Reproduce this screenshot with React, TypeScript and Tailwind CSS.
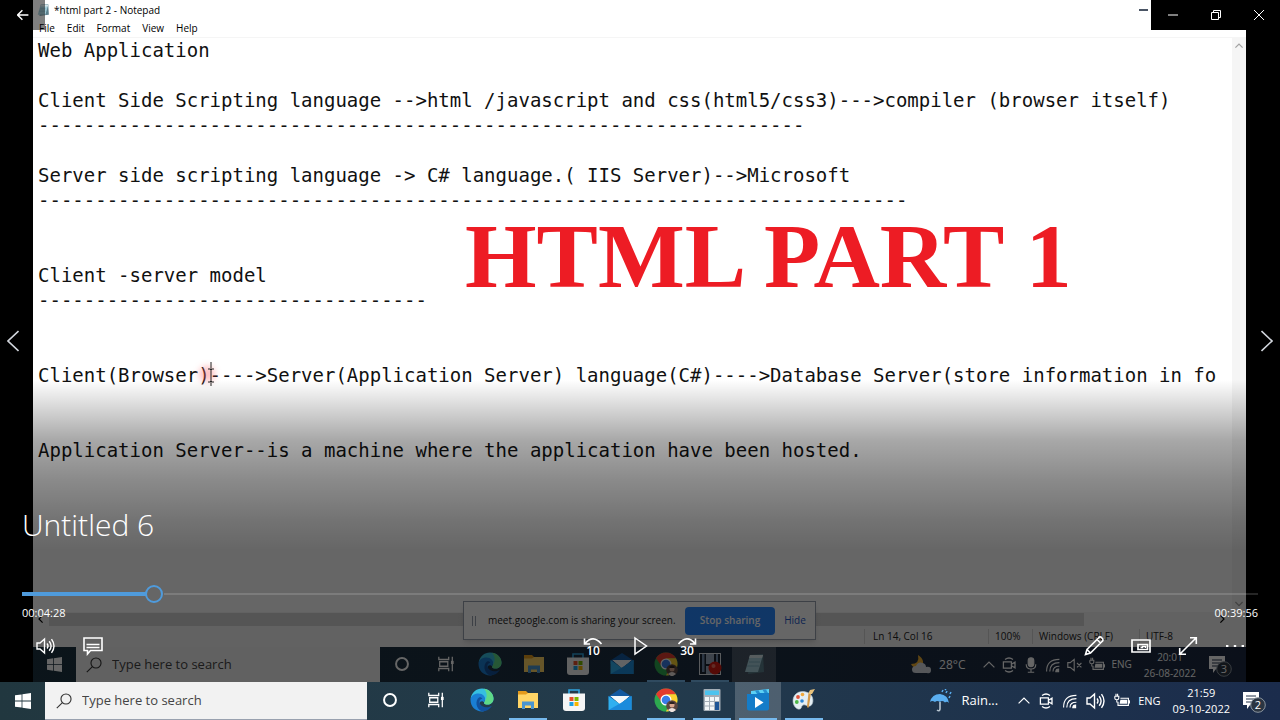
import type { ReactNode } from 'react';

const NOTE_LINES = [
  'Web Application',
  '',
  'Client Side Scripting language -->html /javascript and css(html5/css3)--->compiler (browser itself)',
  '-'.repeat(67),
  '',
  'Server side scripting language -> C# language.( IIS Server)-->Microsoft',
  '-'.repeat(76),
  '',
  '',
  'Client -server model',
  '-'.repeat(34),
  '',
  '',
  'Client(Browser)---->Server(Application Server) language(C#)---->Database Server(store information in fo',
  '',
  '',
  'Application Server--is a machine where the application have been hosted.',
];

const MENUS = ['File', 'Edit', 'Format', 'View', 'Help'];

interface IconProps {
  className?: string;
}

/* ---------- line icons ---------- */

function Line({ className = 'size-5', children }: IconProps & { children: ReactNode }) {
  return (
    <svg viewBox="0 0 20 20" className={className} fill="none" stroke="currentColor" strokeWidth="1.4">
      {children}
    </svg>
  );
}

const WindowsLogo = ({ className = 'size-4' }: IconProps) => (
  <svg viewBox="0 0 16 16" className={className} fill="currentColor">
    <path d="M0 2.3 6.6 1.4V7.6H0zM7.4 1.3 16 0V7.6H7.4zM0 8.4H6.6V14.6L0 13.7zM7.4 8.4H16V16L7.4 14.7z" />
  </svg>
);

const SearchIcon = () => (
  <Line className="size-4">
    <circle cx="12.5" cy="7.5" r="6.3" />
    <path d="M8 12 1 19" />
  </Line>
);

const CortanaIcon = () => (
  <Line className="size-[18px]">
    <circle cx="10" cy="10" r="6.6" strokeWidth="2.2" />
  </Line>
);

const TaskViewIcon = () => (
  <Line className="size-[18px]">
    <path d="M2 2V5H13V2M2 18V15H13V18M3 7.500H12V12.500H3zM17 2V18" />
    <path d="M15.5 6.5H18.5V10H15.5z" fill="currentColor" stroke="none" />
  </Line>
);

const VolumeIcon = () => (
  <Line>
    <path d="M1 7H4L8.5 3V17L4 13H1zM11 7.5Q13 10 11 12.5M13.2 5.2Q17 10 13.2 14.8M15.5 3.2Q20.5 10 15.5 16.8" />
  </Line>
);

const MutedIcon = () => (
  <Line className="size-4">
    <path d="M1 7H4L9 3V17L4 13H1zM12.5 7.5 18 13M18 7.5 12.5 13" />
  </Line>
);

const CaptionIcon = () => (
  <Line>
    <path d="M1 2H19V14.5H7.5L4.5 18V14.5H1z" strokeWidth="1.6" />
    <path d="M3.5 8.5H16.5M3.5 11.5H16.5" />
  </Line>
);

const PlayIcon = () => (
  <Line>
    <path d="M5 2 16.5 10 5 18z" strokeWidth="1.5" />
  </Line>
);

const PencilIcon = () => (
  <Line>
    <path d="M1.5 18.5 3 13.5 14.5 2Q16-.2 18 2 20 4 18 5.5L6.5 17zM3 13.5 6.5 17M13 3.5 16.5 7" strokeWidth="1.6" />
  </Line>
);

const MiniViewIcon = () => (
  <Line>
    <path d="M1 4H19V16H1z" strokeWidth="1.7" />
    <path d="M7 8.5H16.5V13.5H7z" strokeWidth="1.7" />
    <path d="M9.5 11.500H11.5V10.5H14.5V12" />
  </Line>
);

const ExpandIcon = () => (
  <Line>
    <path d="M2 18 18 2M12 1.7H18.3V8M1.7 12V18.3H8" strokeWidth="1.6" />
  </Line>
);

const MoreIcon = () => (
  <Line>
    <path d="M1 10H3.4M8.8 10H11.2M16.6 10H19" strokeWidth="2" />
  </Line>
);

const ChevronUp = () => (
  <Line className="size-3">
    <path d="M1 14 10 5 19 14" strokeWidth="2" />
  </Line>
);

const MeetNowIcon = () => (
  <Line className="size-4">
    <path d="M3 6H13V14H3zM13 9 17.5 6.5V13.5L13 11M5 3Q10-.5 15 3M5 17Q10 20.5 15 17" strokeWidth="1.6" />
  </Line>
);

const MicIcon = () => (
  <Line className="size-4">
    <rect x="6.5" y="1" width="7" height="11" rx="3.5" fill="currentColor" />
    <path d="M4 9Q4 15 10 15T16 9M10 15V19M6 19H14" />
  </Line>
);

const WifiIcon = () => (
  <Line className="size-4">
    <path d="M2 18Q2 3 18 3M6 18Q6 7 18 7M10 18Q10 11.5 18 11.5" />
    <path d="M13.5 18.5Q13.5 15 17 15V18.5z" fill="currentColor" />
  </Line>
);

const BatteryIcon = () => (
  <Line className="size-4">
    <path d="M5 11V15.5H18V6.5H8M19.300 9V13M1 4V6.500Q1 8.500 3.5 8.500T6 6.500V4H1M2.5 1V4M4.5 1V4M3.5 8V12" />
    <path d="M8 8.500H16.500V13.500H7z" fill="currentColor" stroke="none" />
  </Line>
);

function NotificationIcon({ count }: { count: number }) {
  return (
    <span className="relative block size-6">
      <svg viewBox="0 0 24 24" className="size-6">
        <path d="M1 3H17V16H8L5 20V16H1z" fill="currentColor" />
        <path d="M4 7H14M4 10H14M4 13H10" stroke="#22334a" />
        <circle cx="16" cy="16" r="7.3" fill="#2b3542" stroke="#8c96a0" />
      </svg>
      <span className="absolute right-0 bottom-0 w-4 text-center text-[11px] leading-4">{count}</span>
    </span>
  );
}

function SkipIcon({ seconds, back = false }: { seconds: number; back?: boolean }) {
  return (
    <span className="flex flex-col items-center">
      <svg viewBox="0 0 20 9" className="h-[9px] w-5" fill="none" stroke="currentColor" strokeWidth="1.6">
        {back ? <path d="M2 6.5Q10-3 18.5 7M1.5 1.5V7H7" /> : <path d="M1.5 7Q10-3 18 6.5M18.5 1.5V7H13" />}
      </svg>
      <span className="text-xs leading-[10px] font-semibold">{seconds}</span>
    </span>
  );
}

/* ---------- app icons ---------- */

function Art({ children }: { children: ReactNode }) {
  return (
    <svg viewBox="0 0 24 24" className="size-6">
      {children}
    </svg>
  );
}

const EdgeIcon = () => (
  <Art>
    <path d="M.7 10.500C1.500 4.500 6.500.5 12 .5c7 0 11.500 5 11.500 10 0 4-3 6-6 6-3.500 0-4-1.500-3-3 1.500-2.500-.5-5.500-4-5.500z" fill="#36bfe0" />
    <path d="M14 .7c6 1 9.500 5.300 9.500 9.800 0 4-3 6-6 6-3.500 0-4-1.500-3-3C17.500 9.500 17.500 4.500 14 .7z" fill="#5fd987" />
    <path d="M.5 12C.5 8 4 5.500 8.500 5.500c4.500 0 7 3 6.500 6.500-.3 1.200-1 1.700-.7 2.800-1.300-2.300-4.300-2-4.800.7-.5 3 2.500 6 6.500 6.500-1.200.8-2.500 1.500-4 1.500C5.500 23.500.5 18.500.5 12z" fill="#1a7fd4" />
    <path d="M9 9.500c-4 3-3.500 11 3 14 4.500 0 8-2.200 9.800-5.700-1.300 1-3.500 1.700-5.800 1.500-4-.4-7-3-6.500-6 .2-1.600 1.500-2.600 2.800-2.600-.6-1.200-2-1.800-3.300-1.200z" fill="#12509b" />
  </Art>
);

const ExplorerIcon = () => (
  <Art>
    <path d="M2 3H10L12 5H21V8H2z" fill="#e39a1c" />
    <path d="M2 6.500H10L12 5H22V20H2z" fill="#ffd566" />
    <path d="M6 21V13.500H18V21H15V17.500H9V21z" fill="#4a95d0" />
  </Art>
);

const StoreIcon = () => (
  <Art>
    <path d="M7 6V2H17V6" fill="none" stroke="#31a4de" strokeWidth="1.6" />
    <path d="M1 5.500H23V20Q23 23 20 23H4Q1 23 1 20z" fill="#f5f5f5" />
    <path d="M7.500 9H11.500V13H7.500z" fill="#e5502a" />
    <path d="M12.500 9H16.500V13H12.500z" fill="#7bb800" />
    <path d="M7.500 14H11.500V18H7.500z" fill="#1ba1e2" />
    <path d="M12.500 14H16.500V18H12.500z" fill="#f8b500" />
  </Art>
);

const MailIcon = () => (
  <Art>
    <path d="M.5 8.500 12 1 23.500 8.500V12H.5z" fill="#1258a0" />
    <path d="M2.500 8H21.500L12 16.500z" fill="#f3f7fb" />
    <path d="M.5 8 12 16 23.500 8V22H.5z" fill="#2fb0f0" />
    <path d="M2.500 8H21.500L12 15.500z" fill="#f3f7fb" />
    <path d="M.5 22 12 15.500 23.500 8V22z" fill="#1a8bdc" />
  </Art>
);

const ChromeIcon = () => (
  <Art>
    <circle cx="12" cy="12" r="11.5" fill="#2da94f" />
    <path d="M2 6.300A11.500 11.500 0 0 1 22 6.300L12 7 7.500 14z" fill="#e33b2e" />
    <path d="M22 6.300A11.500 11.500 0 0 1 12 23.500L17 13 12 6.300z" fill="#fdd130" />
    <circle cx="12" cy="12" r="5.5" fill="#fff" />
    <circle cx="12" cy="12" r="4.3" fill="#3a7de8" />
    <circle cx="18" cy="18" r="5.8" fill="#5b4640" />
    <circle cx="18" cy="17" r="2.5" fill="#d9a58d" />
    <path d="M14 22Q18 18 22 22L19 24H17z" fill="#eee3df" />
    <path d="M15 15Q18 12 21 15L20 16H16z" fill="#2b2020" />
  </Art>
);

const CalculatorIcon = () => (
  <Art>
    <rect x="3.5" y="1" width="17" height="22" rx="1" fill="#a3adb6" />
    <path d="M5 2.500H19V7H5z" fill="#4cc3ee" />
    <path d="M5 9H9V13H5zM10 9H14V13H10zM15 9H19V13H15zM5 14H9V17.500H5zM10 14H14V17.500H10zM5 18.500H9V22H5zM10 18.500H14V22H10z" fill="#f2f6f8" />
    <path d="M15 14H19V22H15z" fill="#1d5596" />
  </Art>
);

const MoviesIcon = () => (
  <Art>
    <path d="M5 3 23 1V7H5z" fill="#5cd1f5" />
    <path d="M9 2.600 11 6H14.500L12.500 2.200zM16.500 1.800 18.500 5H22L20 1.400z" fill="#2690d0" />
    <path d="M1 6H11L13 5H23V20.500Q23 22.500 21 22.500H3Q1 22.500 1 20.500z" fill="#147cc8" />
    <path d="M9 9 17.500 14.500 9 20z" fill="#fff" />
  </Art>
);

const PaintIcon = () => (
  <Art>
    <path d="M14 4C6 2 1 7 1 13c0 5 4 9 7 8 2-.7 1-3 3-4 3-1 4 2 7 1 4-1 5-12-4-14z" fill="#e4eef3" stroke="#b8c7d0" strokeWidth=".6" />
    <circle cx="4.8" cy="14" r="1.9" fill="#4db848" />
    <circle cx="6" cy="9" r="1.9" fill="#e0533b" />
    <circle cx="10.500" cy="6.500" r="1.8" fill="#f2a93b" />
    <circle cx="10" cy="13" r="1.8" fill="#2b86d6" />
    <path d="M19 5 17 18Q16 22 15 18L16.500 5z" fill="#d49a4a" />
    <path d="M16 6 18 2 23 1 20 6z" fill="#e8c27c" />
  </Art>
);

const RecorderIcon = () => (
  <Art>
    <path d="M1 1H23V23H1z" fill="#dfe3e8" />
    <path d="M2 2H22V22H2z" fill="#16202e" />
    <path d="M8 2H16V12H8zM8 14H16V22H8z" fill="#9aa9bd" />
    <path d="M4 2H6.500V20H4zM18 2H20V20H18z" fill="#7089aa" />
    <circle cx="17" cy="16" r="6.5" fill="#d51a10" />
    <circle cx="15.500" cy="14" r="2" fill="#f2705f" />
  </Art>
);

const NotepadIcon = ({ className = 'size-6' }: IconProps) => (
  <svg viewBox="0 0 24 24" className={className}>
    <path d="M8 3 21 2 22 20 6 22z" fill="#5b7f8c" />
    <path d="M8 3H21L16 20H3z" fill="#a7cfdb" />
    <path d="M8 3H21L20 6H7z" fill="#d8e7eb" />
    <path d="M7 10H18M5 14H17" stroke="#7daebe" />
  </svg>
);

const MoonCloudIcon = () => (
  <Art>
    <path d="M9 2Q11 11 2 11Q4 16 11 15Q18 8 9 2z" fill="#f0ae2f" />
    <path d="M7 20Q3 20 3 16.500T7 13Q9 8 14 10Q17 11 17 14Q22 13 22 17T18 20z" fill="#d6dae0" />
  </Art>
);

const UmbrellaIcon = () => (
  <Art>
    <path d="M1 13Q3 5 11 5Q19 6 20 14Q18 12 16 13.500Q13 11 11 13Q8 11 6 13Q3 11 1 13z" fill="#5aaef0" />
    <path d="M11 13V20Q10.500 23 8 21" fill="none" stroke="#b6c4d0" strokeWidth="1.6" />
    <path d="M13 3 14 1M17 4 18 2M21 5 22 3M20 9 21 7M16 1 17 0" stroke="#5aaef0" strokeWidth="1.5" />
  </Art>
);

/* ---------- task bars ---------- */

interface TaskApp {
  name: string;
  icon: ReactNode;
  running?: boolean;
  active?: boolean;
}

const PINNED: TaskApp[] = [
  { name: 'Cortana', icon: <CortanaIcon /> },
  { name: 'Task View', icon: <TaskViewIcon /> },
  { name: 'Microsoft Edge', icon: <EdgeIcon /> },
];

const INNER_APPS: TaskApp[] = [
  ...PINNED,
  { name: 'File Explorer', icon: <ExplorerIcon /> },
  { name: 'Microsoft Store', icon: <StoreIcon /> },
  { name: 'Mail', icon: <MailIcon /> },
  { name: 'Google Chrome', icon: <ChromeIcon />, running: true },
  { name: 'Recorder', icon: <RecorderIcon />, running: true },
  { name: 'Notepad', icon: <NotepadIcon />, active: true },
];

const OUTER_APPS: TaskApp[] = [
  ...PINNED,
  { name: 'File Explorer', icon: <ExplorerIcon />, running: true },
  { name: 'Microsoft Store', icon: <StoreIcon /> },
  { name: 'Mail', icon: <MailIcon /> },
  { name: 'Google Chrome', icon: <ChromeIcon />, running: true },
  { name: 'Calculator', icon: <CalculatorIcon />, running: true },
  { name: 'Movies & TV', icon: <MoviesIcon />, running: true, active: true },
  { name: 'Paint', icon: <PaintIcon />, running: true },
];

function AppButton({ app, className }: { app: TaskApp; className: string }) {
  return (
    <button
      type="button"
      aria-label={app.name}
      className={`flex shrink-0 flex-col items-center justify-end ${app.active ? 'bg-white/20' : ''} ${className}`}
    >
      <span className="flex flex-1 items-center">{app.icon}</span>
      <span className={`h-[2px] w-[38px] ${app.running ? 'bg-[#76b9ed]' : ''}`} />
    </button>
  );
}

function SearchBox({ id, className }: { id: string; className: string }) {
  return (
    <label htmlFor={id} className={`flex shrink-0 items-center gap-[10px] text-[13px] text-[#333] ${className}`}>
      <SearchIcon />
      <input
        id={id}
        type="text"
        aria-label="Search"
        placeholder="Type here to search"
        className="min-w-0 flex-1 bg-transparent outline-none placeholder:text-[#444]"
      />
    </label>
  );
}

function InnerTaskbar() {
  return (
    <div className="flex h-[35px] shrink-0 bg-gradient-to-r from-[#1c3340] to-[#1b2840] text-white">
      <button type="button" aria-label="Start" className="flex w-[43px] shrink-0 items-center justify-center">
        <WindowsLogo className="size-[15px]" />
      </button>
      <SearchBox id="inner-search" className="w-[304px] bg-[#f2f2f2] pl-[10px]" />
      <div className="flex">
        {INNER_APPS.map((app) => (
          <AppButton key={app.name} app={app} className="w-11" />
        ))}
      </div>
      <div className="ml-auto flex items-center gap-[6px] pr-[14px] text-[11px]">
        <MoonCloudIcon />
        <span className="mr-3 text-xs">28°C</span>
        <ChevronUp />
        <MeetNowIcon />
        <MicIcon />
        <WifiIcon />
        <MutedIcon />
        <BatteryIcon />
        <span className="text-[10px]">ENG</span>
        <div className="mx-[6px] text-center text-[10px] leading-4">
          <div>20:01</div>
          <div>26-08-2022</div>
        </div>
        <NotificationIcon count={3} />
      </div>
    </div>
  );
}

function OuterTaskbar() {
  return (
    <footer className="flex h-[38px] shrink-0 bg-gradient-to-r from-[#21373f] via-[#233b4c] to-[#1b2c4c] text-white">
      <button type="button" aria-label="Start" className="flex w-[45px] shrink-0 items-center justify-center">
        <WindowsLogo />
      </button>
      <SearchBox id="taskbar-search" className="w-[322px] border-b border-gray-400 bg-[#f2f2f2] pl-[11px]" />
      <div className="flex">
        {OUTER_APPS.map((app) => (
          <AppButton key={app.name} app={app} className="w-[46px]" />
        ))}
      </div>
      <div className="ml-auto flex items-center gap-2 pr-[14px] text-[11px]">
        <UmbrellaIcon />
        <span className="mr-3 text-[13px]">Rain...</span>
        <ChevronUp />
        <MeetNowIcon />
        <WifiIcon />
        <VolumeIcon />
        <BatteryIcon />
        <span>ENG</span>
        <div className="mx-1 text-center leading-4">
          <div>21:59</div>
          <div>09-10-2022</div>
        </div>
        <NotificationIcon count={2} />
      </div>
    </footer>
  );
}

/* ---------- recorded screen ---------- */

function SharingBar() {
  return (
    <div className="absolute bottom-[42px] left-[430px] flex h-[39px] w-[353px] items-center border border-gray-400 bg-white pl-2 text-[10px] text-[#222] shadow-md">
      <span className="mr-3 h-[10px] w-1 border-x border-gray-400" />
      <span className="whitespace-nowrap">meet.google.com is sharing your screen.</span>
      <button type="button" className="ml-auto h-7 w-[90px] rounded-sm bg-[#2888ff] font-semibold text-white">
        Stop sharing
      </button>
      <button type="button" className="w-10 text-[#1a56c8]">
        Hide
      </button>
    </div>
  );
}

function NotepadWindow() {
  return (
    <div className="flex min-h-0 flex-1 flex-col bg-white text-black">
      <header className="flex h-5 items-center gap-1 pl-[3px] text-[10px]">
        <NotepadIcon className="size-[14px]" />
        <span>*html part 2 - Notepad</span>
      </header>
      <nav className="flex h-[18px] items-center gap-3 border-b border-neutral-100 pl-[6px] text-[10px]">
        {MENUS.map((menu) => (
          <button key={menu} type="button">
            {menu}
          </button>
        ))}
      </nav>
      <div className="flex min-h-0 flex-1">
        <textarea
          aria-label="Note"
          readOnly
          wrap="off"
          value={NOTE_LINES.join('\n')}
          className="min-w-0 flex-1 resize-none overflow-hidden pl-[5px] font-['DejaVu_Sans_Mono',monospace] text-[19px] leading-[25px] text-[#111] outline-none"
        />
        <div className="flex w-[14px] flex-col items-center justify-between bg-neutral-100 py-1 text-neutral-400">
          <Line className="size-2">
            <path d="M1 14 10 5 19 14" strokeWidth="3" />
          </Line>
          <Line className="size-2">
            <path d="M1 5 10 14 19 5" strokeWidth="3" />
          </Line>
        </div>
      </div>
      <div className="flex h-[14px] items-center justify-between bg-neutral-100 pr-5 text-black">
        <Line className="mx-1 size-2">
          <path d="M14 1 5 10 14 19" strokeWidth="3" />
        </Line>
        <div className="mr-[134px] h-[13px] flex-1 bg-neutral-300" />
        <Line className="size-2">
          <path d="M6 1 15 10 6 19" strokeWidth="3" />
        </Line>
      </div>
      <div className="flex h-[21px] items-center justify-end bg-neutral-100 text-[10px] text-[#222]">
        <span className="w-[124px] border-l border-neutral-300 pl-2">Ln 14, Col 16</span>
        <span className="w-11 border-l border-neutral-300 pl-[6px]">100%</span>
        <span className="w-[107px] border-l border-neutral-300 pl-[6px]">Windows (CRLF)</span>
        <span className="w-[107px] border-l border-neutral-300 pl-[6px]">UTF-8</span>
      </div>
    </div>
  );
}

function RecordedScreen() {
  return (
    <div className="relative mr-[34px] ml-[33px] flex min-w-0 flex-1 flex-col overflow-hidden">
      <NotepadWindow />
      <InnerTaskbar />
      <SharingBar />
      <div className="absolute top-[9px] right-[98px] h-[2px] w-[9px] bg-gray-600" />
      <div className="absolute top-[366px] left-[166px] size-4 rounded-full bg-red-400/40 blur-[3px]" />
      <svg viewBox="0 0 8 24" className="absolute top-[362px] left-[174px] h-6 w-2" fill="none" stroke="#222">
        <path d="M4 0V24M1 7H3L4 8 5 7H7M1 20H3L4 19 5 20H7" />
      </svg>
      <h1 className="absolute top-[204px] left-[432px] font-['Liberation_Serif',serif] text-[92px] leading-[104px] font-bold whitespace-nowrap text-[#ed1c24]">
        HTML PART 1
      </h1>
    </div>
  );
}

/* ---------- player ---------- */

function PlayerButton({ label, children }: { label: string; children: ReactNode }) {
  return (
    <button type="button" aria-label={label} className="flex h-7 w-[47px] items-center justify-center">
      {children}
    </button>
  );
}

function PlayerControls() {
  return (
    <div className="absolute inset-x-0 bottom-0 flex h-[302px] flex-col justify-end bg-[linear-gradient(to_bottom,transparent,rgba(0,0,0,0.34)_60px,rgba(0,0,0,0.46)_100px,rgba(0,0,0,0.55)_140px,rgba(0,0,0,0.6)_170px)] px-[22px] pb-[22px] text-white">
      <h2 className="mb-10 text-[30px] leading-10 font-light">Untitled 6</h2>
      <div className="relative flex h-[18px] items-center">
        <div className="h-1 w-[10%] bg-[#4f9bdc]" />
        <div className="ml-[18px] h-[2px] flex-1 bg-white/15" />
        <input
          type="range"
          aria-label="Seek"
          min={0}
          max={1000}
          defaultValue={101}
          className="absolute inset-0 w-full appearance-none bg-transparent [&::-webkit-slider-thumb]:size-[18px] [&::-webkit-slider-thumb]:appearance-none [&::-webkit-slider-thumb]:rounded-full [&::-webkit-slider-thumb]:border-2 [&::-webkit-slider-thumb]:border-[#4f9bdc]"
        />
      </div>
      <div className="mt-[2px] flex justify-between text-[11px] leading-4">
        <span>00:04:28</span>
        <span>00:39:56</span>
      </div>
      <div className="mt-[11px] grid grid-cols-3">
        <div className="flex">
          <PlayerButton label="Volume"><VolumeIcon /></PlayerButton>
          <PlayerButton label="Subtitles"><CaptionIcon /></PlayerButton>
        </div>
        <div className="flex justify-center">
          <PlayerButton label="Skip back"><SkipIcon seconds={10} back /></PlayerButton>
          <PlayerButton label="Play"><PlayIcon /></PlayerButton>
          <PlayerButton label="Skip forward"><SkipIcon seconds={30} /></PlayerButton>
        </div>
        <div className="flex justify-end">
          <PlayerButton label="Edit"><PencilIcon /></PlayerButton>
          <PlayerButton label="Mini view"><MiniViewIcon /></PlayerButton>
          <PlayerButton label="Full screen"><ExpandIcon /></PlayerButton>
          <PlayerButton label="More"><MoreIcon /></PlayerButton>
        </div>
      </div>
    </div>
  );
}

function WindowChrome() {
  return (
    <div className="absolute inset-x-0 top-0 flex h-[30px] justify-between text-white">
      <button type="button" aria-label="Back" className="flex w-[45px] items-center justify-center bg-black/50">
        <Line className="size-3">
          <path d="M19 10H1M9 2 1 10 9 18" strokeWidth="2.4" />
        </Line>
      </button>
      <div className="flex bg-black">
        <button type="button" aria-label="Minimize" className="flex w-[43px] items-center justify-center">
          <Line className="size-[10px]"><path d="M0 10H20" strokeWidth="2" /></Line>
        </button>
        <button type="button" aria-label="Restore" className="flex w-[43px] items-center justify-center">
          <Line className="size-[10px]"><path d="M1 5H15V19H1zM5 5V1H19V15H15" strokeWidth="2" /></Line>
        </button>
        <button type="button" aria-label="Close" className="flex w-[43px] items-center justify-center">
          <Line className="size-[10px]"><path d="M0 0 20 20M20 0 0 20" strokeWidth="2" /></Line>
        </button>
      </div>
    </div>
  );
}

/* previous / next arrows on the black side margins */
function PageArrows() {
  return (
    <div className="pointer-events-none absolute inset-0 flex items-center justify-between text-gray-300">
      <button type="button" aria-label="Previous" className="pl-[7px]">
        <svg viewBox="0 0 12 22" className="h-[22px] w-3" fill="none" stroke="currentColor" strokeWidth="1.6">
          <path d="M11.500 1 1 11 11.500 21" />
        </svg>
      </button>
      <button type="button" aria-label="Next" className="pr-[7px]">
        <svg viewBox="0 0 12 22" className="h-[22px] w-3" fill="none" stroke="currentColor" strokeWidth="1.6">
          <path d="M.5 1 11 11 .5 21" />
        </svg>
      </button>
    </div>
  );
}

export default function App() {
  return (
    <div className="flex h-screen flex-col overflow-hidden bg-black font-['Open_Sans',sans-serif]">
      <main className="relative flex min-h-0 flex-1">
        <RecordedScreen />
        <PlayerControls />
        <WindowChrome />
        <PageArrows />
      </main>
      <OuterTaskbar />
    </div>
  );
}
